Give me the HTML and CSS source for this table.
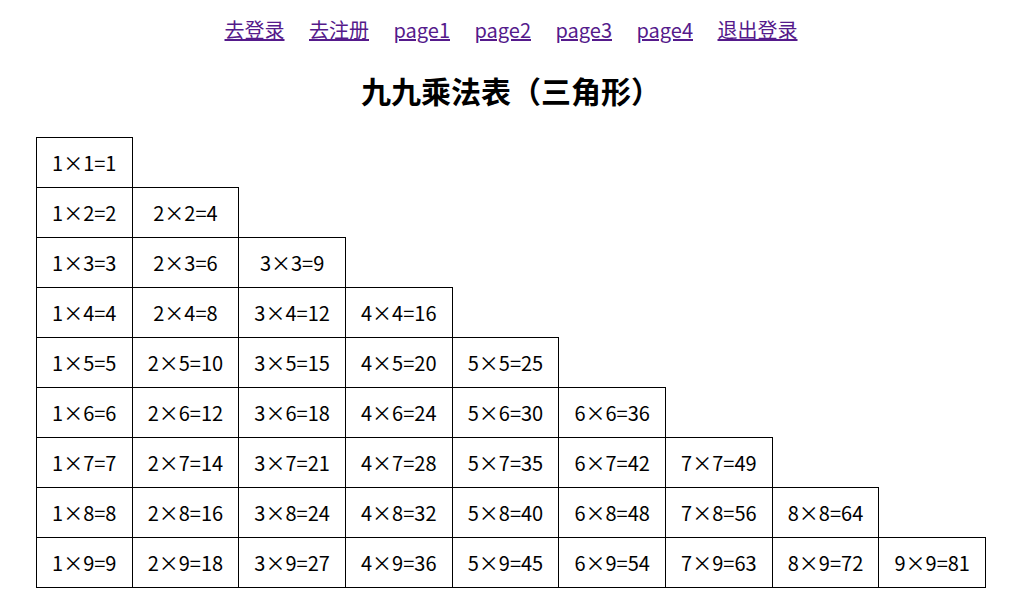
FILE: index.html
```html
<!DOCTYPE html>
<html lang="zh">
<head>
<meta charset="utf-8">
<title>九九乘法表</title>
<link rel="stylesheet" href="styles.css">
</head>
<body>
<nav class="nav">
  <a href="#">去登录</a>
  <a href="#">去注册</a>
  <a href="#">page1</a>
  <a href="#">page2</a>
  <a href="#">page3</a>
  <a href="#">page4</a>
  <a href="#">退出登录</a>
</nav>
<h1 class="title">九九乘法表（三角形）</h1>
<table class="table">
  <tr><td>1×1=1</td></tr>
  <tr><td>1×2=2</td><td>2×2=4</td></tr>
  <tr><td>1×3=3</td><td>2×3=6</td><td>3×3=9</td></tr>
  <tr><td>1×4=4</td><td>2×4=8</td><td>3×4=12</td><td>4×4=16</td></tr>
  <tr><td>1×5=5</td><td>2×5=10</td><td>3×5=15</td><td>4×5=20</td><td>5×5=25</td></tr>
  <tr><td>1×6=6</td><td>2×6=12</td><td>3×6=18</td><td>4×6=24</td><td>5×6=30</td><td>6×6=36</td></tr>
  <tr><td>1×7=7</td><td>2×7=14</td><td>3×7=21</td><td>4×7=28</td><td>5×7=35</td><td>6×7=42</td><td>7×7=49</td></tr>
  <tr><td>1×8=8</td><td>2×8=16</td><td>3×8=24</td><td>4×8=32</td><td>5×8=40</td><td>6×8=48</td><td>7×8=56</td><td>8×8=64</td></tr>
  <tr><td>1×9=9</td><td>2×9=18</td><td>3×9=27</td><td>4×9=36</td><td>5×9=45</td><td>6×9=54</td><td>7×9=63</td><td>8×9=72</td><td>9×9=81</td></tr>
</table>
</body>
</html>
```
FILE: styles.css
```css
body {
  margin: 8px;
  padding-left: 7px;
  font-family: "Noto Sans CJK SC", sans-serif;
  color: #000;
  background: #fff;
}
.nav {
  display: flex;
  justify-content: center;
  gap: 24.5px;
  padding-top: 10px;
  font-size: 20px;
  line-height: 24px;
}
.nav a {
  color: #551a8b;
  text-decoration: underline;
}
.title {
  text-align: center;
  font-size: 30px;
  font-weight: bold;
  margin: 30px 0 29px;
  line-height: 36px;
}
.table {
  border-collapse: collapse;
  margin: 0 auto;
  font-size: 20px;
}
.table td {
  border: 1px solid #000;
  height: 50px;
  padding: 0 15.1px;
  box-sizing: border-box;
  text-align: center;
}
```
